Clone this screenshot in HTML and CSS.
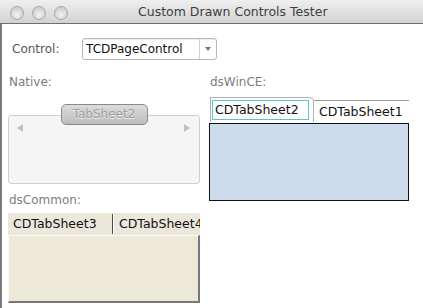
FILE: index.html
```html
<!DOCTYPE html>
<html lang="en">
<head>
  <meta charset="UTF-8">
  <title>Custom Drawn Controls Tester</title>
  <link rel="stylesheet" href="styles.css">
</head>
<body>

<div class="window">
  <div class="titlebar">
    <div class="lights">
      <span class="light"></span>
      <span class="light"></span>
      <span class="light"></span>
    </div>
    <div class="title">Custom Drawn Controls Tester</div>
  </div>

  <div class="content">
    <div class="control-row">
      <span class="control-label">Control:</span>
      <div class="combo">
        <span class="combo-text">TCDPageControl</span>
        <span class="combo-btn"><span class="caret"></span></span>
      </div>
    </div>

    <div class="columns">
      <div class="col">
        <div class="label">Native:</div>
        <div class="native">
          <div class="native-tab">TabSheet2</div>
          <div class="native-box">
            <span class="arrow arrow-left"></span>
            <span class="arrow arrow-right"></span>
          </div>
        </div>

        <div class="label label-common">dsCommon:</div>
        <div class="common-tabs">
          <div class="common-tab">CDTabSheet3</div>
          <div class="common-sep"></div>
          <div class="common-tab">CDTabSheet4</div>
        </div>
        <div class="common-panel"></div>
      </div>

      <div class="col">
        <div class="label">dsWinCE:</div>
        <div class="wince-tabs">
          <div class="wince-tab active"><span class="focus">CDTabSheet2</span></div>
          <div class="wince-tab">CDTabSheet1</div>
        </div>
        <div class="wince-panel"></div>
      </div>
    </div>
  </div>
</div>

</body>
</html>
```

FILE: styles.css
```css
body {
  margin: 0;
  width: 423px;
  height: 308px;
  overflow: hidden;
  background: #fff;
  font-family: "DejaVu Sans", sans-serif;
  font-size: 12px;
  color: #111;
}
.window {
  height: 308px;
}
.titlebar {
  display: flex;
  align-items: center;
  height: 23px;
  background: linear-gradient(to bottom, #efefef, #d2d2d2);
  border-bottom: 1px solid #6e6e6e;
}
.lights {
  display: flex;
  gap: 8px;
  padding-left: 10px;
  padding-top: 2px;
}
.light {
  width: 12px;
  height: 12px;
  border-radius: 50%;
  border: 1px solid #a9a9a9;
  background: radial-gradient(circle at 50% 65%, #f4f4f4, #cfcfcf 70%);
}
.title {
  margin-left: 70px;
  color: #3e3e3e;
  font-size: 12.5px;
}
.content {
  border-left: 2px solid #7a7a7a;
  height: 284px;
  padding: 14px 0 0 6px;
}
.control-row {
  display: flex;
  align-items: center;
}
.control-label {
  width: 70px;
  padding-left: 4px;
  color: #555;
}
.combo {
  display: flex;
  align-items: center;
  width: 133px;
  height: 20px;
  border: 1px solid #b8b8b8;
  border-radius: 3px;
  box-shadow: inset 0 1px 1px rgba(0,0,0,0.08);
}
.combo-text {
  flex: 1;
  padding-left: 3px;
}
.combo-btn {
  display: flex;
  align-items: center;
  justify-content: center;
  width: 16px;
  height: 20px;
  border-left: 1px solid #d0d0d0;
}
.caret {
  width: 0;
  height: 0;
  border-left: 3px solid transparent;
  border-right: 3px solid transparent;
  border-top: 4px solid #777;
}
.columns {
  display: grid;
  grid-template-columns: 192px 200px;
  column-gap: 9px;
  margin-top: 15px;
}
.col {
  display: flex;
  flex-direction: column;
}
.label {
  color: #7d7d7d;
  line-height: 15px;
  padding-left: 1px;
}
.native {
  display: flex;
  flex-direction: column;
  align-items: center;
  margin-top: 14px;
}
.native-tab {
  position: relative;
  z-index: 1;
  width: 85px;
  height: 19px;
  line-height: 19px;
  text-align: center;
  border: 1px solid #8a8a8a;
  border-radius: 5px;
  background: linear-gradient(to bottom, #dcdcdc, #bdbdbd);
  color: #a0a0a0;
  text-shadow: 0 1px 0 #eee;
}
.native-box {
  display: flex;
  justify-content: space-between;
  align-items: flex-start;
  box-sizing: border-box;
  width: 192px;
  height: 69px;
  margin-top: -10px;
  padding: 8px 9px 0 8px;
  background: #f5f5f5;
  border: 1px solid #cfcfcf;
  border-radius: 3px;
}
.arrow {
  width: 0;
  height: 0;
  border-top: 4px solid transparent;
  border-bottom: 4px solid transparent;
}
.arrow-left {
  border-right: 6px solid #c2c2c2;
}
.arrow-right {
  border-left: 6px solid #c2c2c2;
}
.label-common {
  margin-top: 9px;
}
.common-tabs {
  display: flex;
  align-items: stretch;
  height: 22px;
  margin-top: 5px;
  background: #ebe8db;
  overflow: hidden;
  white-space: nowrap;
}
.common-tab {
  flex: none;
  line-height: 22px;
  padding-left: 5px;
  font-size: 12.5px;
}
.common-tab:first-child {
  width: 99px;
}
.common-sep {
  flex: none;
  width: 1px;
  margin: 1px 0;
  background: #4a4a4a;
  border-right: 1px solid #fff;
}
.common-panel {
  box-sizing: border-box;
  height: 68px;
  background: #ece9d9;
  border-top: 1px solid #fafaf5;
  border-left: 1px solid #fafaf5;
  border-right: 2px solid #787878;
  border-bottom: 2px solid #787878;
}
.wince-tabs {
  display: flex;
  align-items: flex-end;
  height: 25px;
  margin-top: 7px;
}
.wince-tab {
  box-sizing: border-box;
  height: 22px;
  line-height: 22px;
  padding-left: 5px;
  border-top: 1px solid #9c9c9c;
  flex: 1;
  font-size: 12.5px;
}
.wince-tab.active {
  flex: 0 0 104px;
  height: 25px;
  margin-left: 1px;
  padding: 2px 0 0 1px;
  border: 1px solid #b0b0b0;
  border-bottom: none;
  border-top-right-radius: 5px;
}
.focus {
  display: block;
  box-sizing: border-box;
  width: 97px;
  height: 20px;
  line-height: 18px;
  padding-left: 2px;
  border: 1px solid #58c6c3;
}
.wince-panel {
  box-sizing: border-box;
  height: 78px;
  margin-top: 1px;
  background: #cddced;
  border: 1px solid #111;
}
```
